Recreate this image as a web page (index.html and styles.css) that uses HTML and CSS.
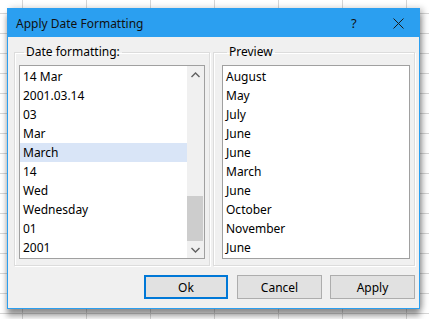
FILE: index.html
```html
<!DOCTYPE html>
<html>
<head>
<meta charset="utf-8">
<title>Apply Date Formatting</title>
<link rel="stylesheet" href="styles.css">
</head>
<body>
<div class="sheet">
	<div class="dialog">
		<div class="titlebar">
			<span class="title">Apply Date Formatting</span>
			<span class="help">?</span>
			<span class="close">
				<svg width="11" height="11" viewBox="0 0 11 11"><path d="M0.5 0.5 L10.5 10.5 M10.5 0.5 L0.5 10.5" stroke="#1a1a1a" stroke-width="1" fill="none"/></svg>
			</span>
		</div>
		<div class="content">
			<div class="groups">
				<fieldset class="group group-left">
					<legend>Date formatting:</legend>
					<div class="listbox">
						<ul class="items">
							<li>14 Mar</li>
							<li>2001.03.14</li>
							<li>03</li>
							<li>Mar</li>
							<li class="selected">March</li>
							<li>14</li>
							<li>Wed</li>
							<li>Wednesday</li>
							<li>01</li>
							<li>2001</li>
						</ul>
						<div class="scrollbar">
							<div class="arrow">
								<svg width="9" height="6" viewBox="0 0 9 6"><path d="M0.5 5 L4.5 1 L8.5 5" stroke="#606060" stroke-width="1.4" fill="none"/></svg>
							</div>
							<div class="track"></div>
							<div class="thumb"></div>
							<div class="arrow">
								<svg width="9" height="6" viewBox="0 0 9 6"><path d="M0.5 1 L4.5 5 L8.5 1" stroke="#606060" stroke-width="1.4" fill="none"/></svg>
							</div>
						</div>
					</div>
				</fieldset>
				<fieldset class="group group-right">
					<legend>Preview</legend>
					<div class="listbox">
						<ul class="items">
							<li>August</li>
							<li>May</li>
							<li>July</li>
							<li>June</li>
							<li>June</li>
							<li>March</li>
							<li>June</li>
							<li>October</li>
							<li>November</li>
							<li>June</li>
						</ul>
					</div>
				</fieldset>
			</div>
			<div class="buttons">
				<button class="btn btn-default">Ok</button>
				<button class="btn">Cancel</button>
				<button class="btn">Apply</button>
			</div>
		</div>
	</div>
</div>
</body>
</html>
```

FILE: styles.css
```css
body {
	margin: 0;
	font-family: "Noto Sans", "DejaVu Sans", sans-serif;
	font-size: 12px;
	color: #000;
}
.sheet {
	box-sizing: border-box;
	width: 429px;
	height: 319px;
	padding: 8px 0 0 7px;
	overflow: hidden;
	background-color: #fff;
	background-image:
		linear-gradient(to right, #d6d6d6 1px, transparent 1px),
		linear-gradient(to bottom, #d6d6d6 1px, transparent 1px);
	background-size: 64px 20px;
	background-position: 22px 13px;
}
.dialog {
	box-sizing: border-box;
	width: 413px;
	height: 301px;
	background: #f0f0f0;
	border: 1px solid #2b9ff0;
	border-top: 0;
	box-shadow: 0 7px 6px rgba(0, 0, 0, 0.38), 3px 0 6px rgba(0, 0, 0, 0.22);
	display: flex;
	flex-direction: column;
}
.titlebar {
	height: 29px;
	background: #2b9ff0;
	display: flex;
	align-items: center;
	padding: 1px 0 0 8px;
	box-sizing: border-box;
}
.title {
	flex: 1;
	color: #111;
}
.help {
	width: 14px;
	margin-right: 28px;
	color: #111;
	font-size: 13px;
}
.close {
	width: 11px;
	height: 11px;
	margin-right: 15px;
	display: flex;
}
.content {
	flex: 1;
	padding: 0 4px 0 6px;
	display: flex;
	flex-direction: column;
}
.groups {
	display: flex;
	gap: 3px;
	margin-top: 7px;
}
.group {
	margin: 0;
	border: 1px solid #dcdcdc;
	box-shadow: inset 1px 1px 0 #fff, 1px 1px 0 #fff;
	padding: 5px 4px 6px 4px;
	min-width: 0;
}
.group-left {
	width: 196px;
	box-sizing: border-box;
}
.group-right {
	flex: 1;
	padding-left: 8px;
}
.group legend {
	padding: 0 2px;
	margin-left: 5px;
	line-height: 16px;
}
.listbox {
	box-sizing: border-box;
	height: 194px;
	border: 1px solid #a0a0a0;
	background: #fff;
	display: flex;
}
.items {
	list-style: none;
	margin: 0;
	padding: 1px 0 0 0;
	flex: 1;
}
.items li {
	height: 19px;
	line-height: 19px;
	padding-left: 3px;
}
.items li.selected {
	background: #d9e5f7;
}
.scrollbar {
	width: 17px;
	background: #f0f0f0;
	display: flex;
	flex-direction: column;
}
.arrow {
	height: 17px;
	display: flex;
	align-items: center;
	justify-content: center;
}
.track {
	flex: 1;
}
.thumb {
	height: 45px;
	margin: 0 1px 0 0;
	background: #cdcdcd;
}
.buttons {
	display: flex;
	justify-content: flex-end;
	gap: 8px;
	margin-top: 9px;
}
.btn {
	box-sizing: border-box;
	width: 85px;
	height: 24px;
	font-family: inherit;
	font-size: 12px;
	color: #000;
	background: #e1e1e1;
	border: 1px solid #adadad;
	padding: 0;
}
.btn-default {
	width: 84px;
	border: 2px solid #0078d7;
	margin-right: 1px;
}
```
